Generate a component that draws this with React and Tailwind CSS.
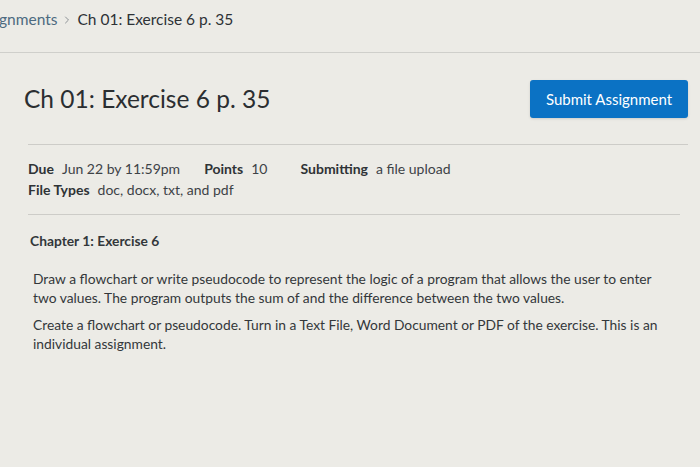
import { ChevronRight } from "lucide-react";

const Detail = ({ label, value, className = "" }) => (
  <div className={`flex items-baseline ${className}`}>
    <span className="font-bold text-[#2f3336]">{label}</span>
    <span className="ml-[8px] text-[#3d4246]">{value}</span>
  </div>
);

export default function App() {
  return (
    <div
      className="h-[467px] w-[700px] overflow-hidden bg-[#ecebe6] text-[#2d3034]"
      style={{ fontFamily: "Lato, 'Open Sans', sans-serif" }}
    >
      {/* Breadcrumb */}
      <div className="flex h-[52px] items-center gap-[4px] pb-[12px] text-[15.5px]">
        <span className="-ml-[1px] text-[#4d6a80]">gnments</span>
        <ChevronRight size={12} className="text-[#8d9296]" />
        <span className="text-[#2e3236]">Ch 01: Exercise 6 p. 35</span>
      </div>
      <div className="h-px bg-[#cfcfcb]" />

      <div className="pl-[28px] pr-[12px]">
        {/* Header */}
        <div className="flex items-center justify-between pb-[26px] pt-[27px]">
          <h1 className="-ml-[4px] text-[24.5px] leading-[36px] text-[#2b2e31]">
            Ch 01: Exercise 6 p. 35
          </h1>
          <button className="h-[38px] w-[158px] rounded-[3px] bg-[#0b72c4] text-[15px] text-white shadow-sm">
            Submit Assignment
          </button>
        </div>
        <div className="h-px bg-[#cdccc8]" />

        {/* Details */}
        <div className="pb-[14px] pt-[13px] text-[14px] leading-[21px]">
          <div className="flex">
            <Detail label="Due" value="Jun 22 by 11:59pm" />
            <Detail label="Points" value="10" className="ml-[24px]" />
            <Detail label="Submitting" value="a file upload" className="ml-[33px]" />
          </div>
          <Detail label="File Types" value="doc, docx, txt, and pdf" />
        </div>
        <div className="mr-[8px] h-px bg-[#cdccc8]" />

        {/* Description */}
        <div className="pl-[2px] pr-[26px] pt-[16px] text-[13.8px] leading-[19px] text-[#33373a]">
          <p className="font-bold">Chapter 1: Exercise 6</p>
          <p className="mt-[19px] pl-[3px]">
            Draw a flowchart or write pseudocode to represent the logic of a program that allows the user to enter
            two values. The program outputs the sum of and the difference between the two values.
          </p>
          <p className="mt-[8px] pl-[3px]">
            Create a flowchart or pseudocode. Turn in a Text File, Word Document or PDF of the exercise. This is an
            individual assignment.
          </p>
        </div>
      </div>
    </div>
  );
}
